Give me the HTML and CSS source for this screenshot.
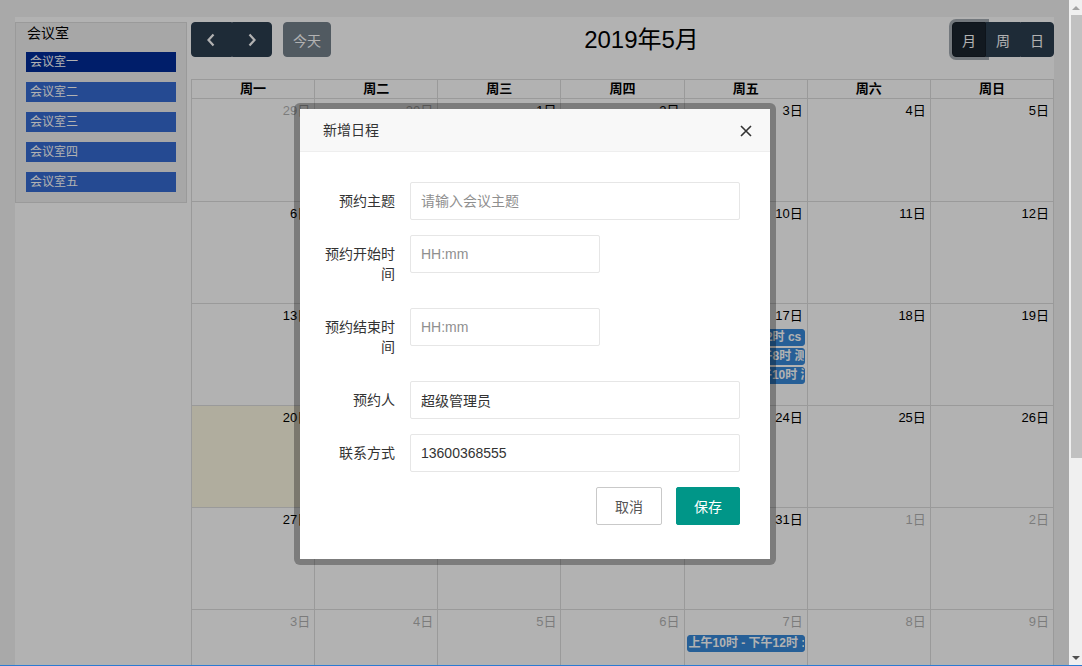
FILE: index.html
```html
<!DOCTYPE html>
<html lang="zh-CN">
<head>
<meta charset="utf-8">
<title>会议室预约</title>
<link rel="stylesheet" href="styles.css">
</head>
<body>
<div class="viewport">
  <div class="page">
    <aside class="rooms">
      <div class="rooms-title">会议室</div>
      <div class="room-list">
        <div class="room active">会议室一</div>
        <div class="room">会议室二</div>
        <div class="room">会议室三</div>
        <div class="room">会议室四</div>
        <div class="room">会议室五</div>
      </div>
    </aside>
    <section class="calendar">
      <div class="toolbar">
        <div class="tb-left">
          <div class="btn-group">
            <button class="btn nav"><svg width="10" height="14" viewBox="0 0 10 14"><polyline points="7.5,1.5 2.5,7 7.5,12.5" fill="none" stroke="#fff" stroke-width="2.2"/></svg></button>
            <button class="btn nav"><svg width="10" height="14" viewBox="0 0 10 14"><polyline points="2.5,1.5 7.5,7 2.5,12.5" fill="none" stroke="#fff" stroke-width="2.2"/></svg></button>
          </div>
          <button class="btn today">今天</button>
        </div>
        <h2 class="title">2019年5月</h2>
        <div class="btn-group">
          <button class="btn view active">月</button>
          <button class="btn view">周</button>
          <button class="btn view">日</button>
        </div>
      </div>
      <div class="grid">
        <div class="hd">周一</div><div class="hd">周二</div><div class="hd">周三</div><div class="hd">周四</div><div class="hd">周五</div><div class="hd">周六</div><div class="hd">周日</div>

        <div class="day r1 other"><div class="num">29日</div></div>
        <div class="day r1 other"><div class="num">30日</div></div>
        <div class="day r1"><div class="num">1日</div></div>
        <div class="day r1"><div class="num">2日</div></div>
        <div class="day r1"><div class="num">3日</div></div>
        <div class="day r1"><div class="num">4日</div></div>
        <div class="day r1"><div class="num">5日</div></div>

        <div class="day"><div class="num">6日</div></div>
        <div class="day"><div class="num">7日</div></div>
        <div class="day"><div class="num">8日</div></div>
        <div class="day"><div class="num">9日</div></div>
        <div class="day"><div class="num">10日</div></div>
        <div class="day"><div class="num">11日</div></div>
        <div class="day"><div class="num">12日</div></div>

        <div class="day"><div class="num">13日</div></div>
        <div class="day"><div class="num">14日</div></div>
        <div class="day"><div class="num">15日</div></div>
        <div class="day"><div class="num">16日</div></div>
        <div class="day"><div class="num">17日</div>
          <div class="events">
            <div class="event">上午9时 - 下午2时 cs</div>
            <div class="event">上午10时 - 下午8时 测试会议</div>
            <div class="event">上午11时 - 下午10时 测试会议</div>
          </div>
        </div>
        <div class="day"><div class="num">18日</div></div>
        <div class="day"><div class="num">19日</div></div>

        <div class="day today"><div class="num">20日</div></div>
        <div class="day"><div class="num">21日</div></div>
        <div class="day"><div class="num">22日</div></div>
        <div class="day"><div class="num">23日</div></div>
        <div class="day"><div class="num">24日</div></div>
        <div class="day"><div class="num">25日</div></div>
        <div class="day"><div class="num">26日</div></div>

        <div class="day"><div class="num">27日</div></div>
        <div class="day"><div class="num">28日</div></div>
        <div class="day"><div class="num">29日</div></div>
        <div class="day"><div class="num">30日</div></div>
        <div class="day"><div class="num">31日</div></div>
        <div class="day other"><div class="num">1日</div></div>
        <div class="day other"><div class="num">2日</div></div>

        <div class="day other"><div class="num">3日</div></div>
        <div class="day other"><div class="num">4日</div></div>
        <div class="day other"><div class="num">5日</div></div>
        <div class="day other"><div class="num">6日</div></div>
        <div class="day other"><div class="num">7日</div>
          <div class="events">
            <div class="event">上午10时 - 下午12时 : 测试会议</div>
          </div>
        </div>
        <div class="day other"><div class="num">8日</div></div>
        <div class="day other"><div class="num">9日</div></div>
      </div>
    </section>
  </div>

  <div class="shade"></div>

  <div class="layer">
    <div class="layer-title">新增日程
      <span class="layer-close"><svg width="12" height="12" viewBox="0 0 12 12"><path d="M1 1L11 11M11 1L1 11" stroke="#333" stroke-width="1.6" fill="none"/></svg></span>
    </div>
    <form class="form">
      <div class="item">
        <label class="label">预约主题</label>
        <input class="input" type="text" placeholder="请输入会议主题">
      </div>
      <div class="item">
        <label class="label">预约开始时间</label>
        <input class="input short" type="text" placeholder="HH:mm">
      </div>
      <div class="item">
        <label class="label">预约结束时间</label>
        <input class="input short" type="text" placeholder="HH:mm">
      </div>
      <div class="item">
        <label class="label">预约人</label>
        <input class="input" type="text" value="超级管理员">
      </div>
      <div class="item">
        <label class="label">联系方式</label>
        <input class="input" type="text" value="13600368555">
      </div>
      <div class="actions">
        <button type="button" class="lbtn">取消</button>
        <button type="button" class="lbtn primary">保存</button>
      </div>
    </form>
  </div>
</div>
<div class="scrollbar">
  <div class="sb-btn"><span class="tri-up"></span></div>
  <div class="sb-thumb"></div>
  <div class="sb-space"></div>
  <div class="sb-btn"><span class="tri-down"></span></div>
</div>
</body>
</html>
```
FILE: styles.css
```css
* { box-sizing: border-box; }
html, body { margin: 0; height: 666px; overflow: hidden; }
body {
  display: flex;
  background: #f3f3f3;
  font-family: "Liberation Sans", "Noto Sans CJK SC", sans-serif;
  font-size: 14px;
  color: #000;
  border-bottom: 1px solid #2a7bd3;
}
.viewport { flex: 1; position: relative; overflow: hidden; }
.page {
  margin: 17px 15px 0;
  background: #fff;
  height: 760px;
  padding-top: 5px;
  display: flex;
  gap: 4px;
  align-items: flex-start;
}
.rooms {
  width: 172px;
  flex: none;
  border: 1px solid #ddd;
  background: #f0f0f0;
  padding: 0 10px 10px;
}
.rooms-title { line-height: 20px; padding-left: 1px; margin-bottom: 9px; }
.room-list { display: flex; flex-direction: column; gap: 10px; }
.room {
  height: 20px;
  line-height: 20px;
  font-size: 12px;
  color: #fff;
  background: #356ad1;
  padding-left: 4px;
}
.room.active { background: #002c99; }

.calendar { flex: 1; }
.toolbar {
  display: flex;
  justify-content: space-between;
  align-items: center;
  height: 35px;
  margin-bottom: 22px;
}
.tb-left { display: flex; }
.btn-group { display: flex; }
.btn {
  height: 35px;
  padding: 0 9px;
  background: #2c3e50;
  border: 1px solid #2c3e50;
  color: #fff;
  font-family: inherit;
  font-size: 14px;
  display: flex;
  align-items: center;
  justify-content: center;
  border-radius: 0;
  position: relative;
}
.btn-group .btn:first-child { border-radius: 4px 0 0 4px; }
.btn-group .btn:last-child { border-radius: 0 4px 4px 0; }
.btn.nav { width: 40.5px; }
.btn.today { margin-left: 11px; width: 48px; border-radius: 4px; opacity: .65; }
.btn.view { width: 34px; }
.btn.active { background: #1a252f; border-color: #151e27; box-shadow: 0 0 0 3px rgba(76, 91, 106, .5); }
.title { margin: 0; font-size: 24px; font-weight: normal; line-height: 30px; }

.grid {
  display: grid;
  grid-template-columns: repeat(7, 1fr);
  border-left: 1px solid #ddd;
  border-top: 1px solid #ddd;
}
.hd {
  border-right: 1px solid #ddd;
  border-bottom: 1px solid #ddd;
  height: 19px;
  line-height: 18px;
  text-align: center;
  font-weight: bold;
  font-size: 13px;
}
.day {
  border-right: 1px solid #ddd;
  border-bottom: 1px solid #ddd;
  height: 102px;
  min-width: 0;
}
.day.r1 { height: 103px; }
.day.today { background: #fcf8e3; }
.num {
  text-align: right;
  padding: 3px 4px 0;
  line-height: 18px;
  height: 21px;
  font-size: 13px;
}
.day.other .num { opacity: .3; }
.events { padding-top: 2px; }
.event {
  margin: 2px 2px 0;
  background: #3788d8;
  border: 1px solid #3788d8;
  border-radius: 3px;
  color: #fff;
  font-weight: bold;
  font-size: 12px;
  line-height: 15px;
  white-space: nowrap;
  overflow: hidden;
  padding: 0 1px;
}

.shade { position: absolute; inset: 0; background: rgba(0, 0, 0, .3); }

.layer {
  position: absolute;
  left: 294px;
  top: 103px;
  width: 482px;
  border: 6px solid rgba(0, 0, 0, .3);
  border-radius: 6px;
  background: #fff;
  background-clip: padding-box;
}
.layer-title {
  position: relative;
  height: 43px;
  line-height: 42px;
  padding-left: 23px;
  background: #f8f8f8;
  border-bottom: 1px solid #eee;
  color: #333;
  font-size: 14px;
}
.layer-close { position: absolute; right: 18px; top: 16px; width: 12px; height: 12px; display: flex; }
.form { padding: 30px 0 34px; margin: 0; }
.item { display: flex; align-items: flex-start; margin-bottom: 15px; }
.label {
  flex: none;
  width: 110px;
  padding: 9px 15px;
  line-height: 20px;
  text-align: right;
  color: #333;
}
.input {
  flex: 1;
  min-width: 0;
  margin: 0 30px 0 0;
  height: 38px;
  border: 1px solid #e6e6e6;
  border-radius: 2px;
  padding: 0 10px;
  font-family: inherit;
  font-size: 14px;
  color: #333;
  background: #fff;
  outline: none;
}
.input.short { flex: none; width: 190px; }
.input::placeholder { color: #8f8f8f; }
.actions { display: flex; justify-content: flex-end; gap: 14px; padding-right: 30px; }
.lbtn {
  height: 38px;
  padding: 0 18px;
  border: 1px solid #c9c9c9;
  background: #fff;
  color: #555;
  border-radius: 2px;
  font-family: inherit;
  font-size: 14px;
}
.lbtn.primary { background: #009688; border-color: #009688; color: #fff; padding: 0 17px; }

.scrollbar {
  width: 13px;
  flex: none;
  background: #f0f0f0;
  display: flex;
  flex-direction: column;
}
.sb-btn { height: 15px; display: flex; align-items: center; justify-content: center; flex: none; }
.sb-thumb { height: 443px; margin-left: 2px; background: #c1c1c1; flex: none; }
.sb-space { flex: 1; }
.tri-up { border-left: 4px solid transparent; border-right: 4px solid transparent; border-bottom: 4px solid #a3a3a3; }
.tri-down { border-left: 4px solid transparent; border-right: 4px solid transparent; border-top: 4px solid #505050; }
```
